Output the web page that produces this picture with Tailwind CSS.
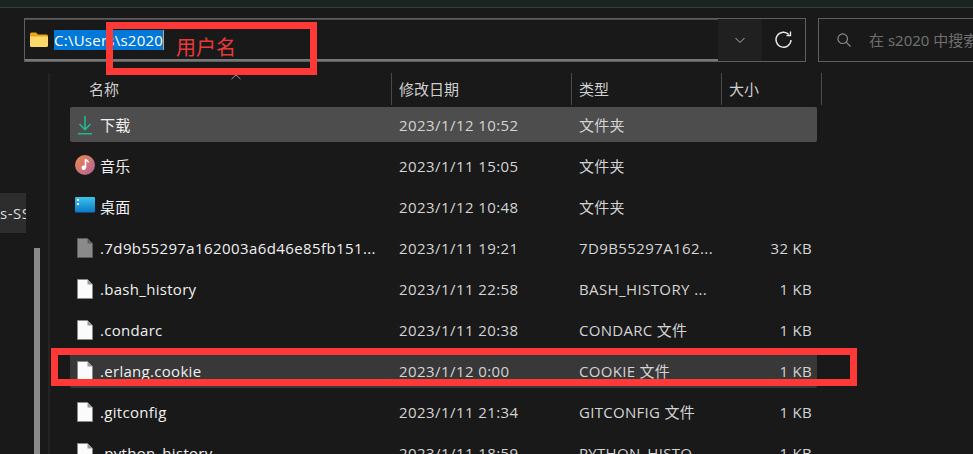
<!DOCTYPE html>
<html lang="zh-CN">
<head>
  <meta charset="UTF-8" />
  <title>s2020</title>
  <script src="https://cdn.jsdelivr.net/npm/@tailwindcss/browser@4"></script>
</head>
<body class="bg-[#191919] text-[#f0f0f0] font-['Noto_Sans','Noto_Sans_CJK_SC',sans-serif] text-[15px] leading-none">
  <div class="relative w-[973px] h-[454px] overflow-hidden">
    <!-- top strip -->
    <div class="h-[8px] bg-[#1a2421] border-b border-[#3a3c3b]"></div>

    <!-- toolbar -->
    <div class="flex h-[44px] mt-[10px] pl-[24px]">
      <div class="flex w-[782px] shrink-0 border border-[#5e5e5e]">
        <div class="flex flex-1 items-center pl-[5px] border-b-2 border-t border-[#777] border-t-[#4c4c4c]">
          <svg class="w-[18px] h-[15px] mr-[6px]" viewBox="0 0 18 15">
            <path d="M0 2a1.500 1.500 0 0 1 1.500-1.500h4.500l2 2h8.500a1.500 1.500 0 0 1 1.500 1.500v1h-18z" fill="#e8a70f"/>
            <path d="M0 4.500h18v9a1.500 1.500 0 0 1-1.500 1.500h-15a1.500 1.500 0 0 1-1.500-1.500z" fill="#fcd96b"/>
          </svg>
          <span class="bg-[#0078d7] text-white h-[20px] leading-[20px] w-[110px] tracking-[0.25px] whitespace-nowrap overflow-hidden border-r border-[#d9a066] font-['Open_Sans',sans-serif]">C:\Users\s2020</span>
        </div>
        <div class="w-[44px] bg-[#202020] flex items-center justify-center">
          <svg class="w-[12px] h-[7px]" viewBox="0 0 12 7" fill="none" stroke="#b5b5b5" stroke-width="1"><path d="M1.500 1l4.500 4.500 4.500-4.500"/></svg>
        </div>
        <div class="w-[43px] flex items-center justify-center pr-[2px]">
          <svg class="w-[18px] h-[18px]" viewBox="0 0 18 18" fill="none" stroke="#e8e8e8" stroke-width="1.400"><path d="M15 3.600a7.500 7.500 0 1 0 2 5.400"/><path d="M16.500 0.500v4h-4" stroke-width="1.300"/></svg>
        </div>
      </div>
      <div class="flex items-center ml-[12px] w-[200px] border border-[#5e5e5e] pl-[18px] shrink-0 whitespace-nowrap text-[#6f6f6f]">
        <svg class="w-[14px] h-[14px] mr-[18px]" viewBox="0 0 14 14" fill="none" stroke="#8a8a8a" stroke-width="1.200"><circle cx="5.700" cy="5.700" r="4.800"/><path d="M9.200 9.200l4.300 4.300"/></svg>
        <span>在 s2020 中搜索</span>
      </div>
    </div>

    <div class="flex mt-[11px]">
      <!-- left pane edge -->
      <div class="w-[50px] h-[381px] border-r-2 border-[#232323] shrink-0 flex flex-col">
        <div class="w-[26px] h-[40px] mt-[120px] bg-[#2d2d2d] overflow-hidden flex items-center whitespace-nowrap tracking-[0.5px] text-[#dcdcdc] font-['Open_Sans',sans-serif]">s-SS</div>
        <div class="w-[6px] ml-[34px] mt-[15px] flex-1 bg-[#8a8a8a]"></div>
      </div>

      <!-- file list -->
      <div class="pl-[20px] w-[772px] shrink-0">
        <div class="relative grid grid-cols-[321px_180px_150px_101px] h-[32px] items-center text-[#cfcfcf]">
          <span class="pl-[19px]">名称</span>
          <span class="pl-[7px] h-full flex items-center border-l border-[#4a4a4a]">修改日期</span>
          <span class="pl-[7px] h-full flex items-center border-l border-[#4a4a4a]">类型</span>
          <span class="pl-[7px] h-full flex items-center border-x border-[#4a4a4a]">大小</span>
          <svg class="absolute left-[160px] top-[1px] w-[12px] h-[6px]" viewBox="0 0 12 6" fill="none" stroke="#9a9a9a"><path d="M1.500 5l4.500-4 4.500 4"/></svg>
        </div>

        <div class="mt-[2px] w-[747px] flex flex-col gap-[6px] font-['Open_Sans','Noto_Sans_CJK_SC',sans-serif] tracking-[0.3px] [&_span]:pt-[2px]">
          <div class="grid grid-cols-[321px_180px_150px_96px] h-[35px] items-center bg-[#4d4d4d] rounded-[2px] text-[#d4d4d4]">
            <div class="flex items-center pl-[8px] text-[#f0f0f0]">
              <svg class="w-[14px] h-[20px] mr-[8px]" viewBox="0 0 14 20" fill="none" stroke="#22b890" stroke-width="1.600"><path d="M7 1v13M1.500 9l5.500 5.500 5.500-5.500M0 18.700h14"/></svg>
              <span>下载</span>
            </div>
            <span class="pl-[8px] tracking-[0.43px]">2023/1/12 10:52</span><span class="pl-[8px]">文件夹</span><span></span>
          </div>

          <div class="grid grid-cols-[321px_180px_150px_96px] h-[35px] items-center text-[#d4d4d4]">
            <div class="flex items-center pl-[5px] text-[#f0f0f0]">
              <svg class="w-[20px] h-[20px] mr-[5px] -mt-[2px]" viewBox="0 0 20 20">
                <defs><linearGradient id="music" x1="0" y1="0" x2="1" y2="1"><stop offset="0" stop-color="#ef8a4a"/><stop offset="1" stop-color="#b0609f"/></linearGradient></defs>
                <circle cx="10" cy="10" r="10" fill="url(#music)"/>
                <path d="M10.500 4v8.500" stroke="#fff" stroke-width="1.600"/><circle cx="8.700" cy="12.800" r="2.200" fill="#fff"/><path d="M10.500 4c1 1.500 2.500 1.500 3 3.500" stroke="#fff" stroke-width="1.300" fill="none"/>
              </svg>
              <span>音乐</span>
            </div>
            <span class="pl-[8px] tracking-[0.43px]">2023/1/11 15:05</span><span class="pl-[8px]">文件夹</span><span></span>
          </div>

          <div class="grid grid-cols-[321px_180px_150px_96px] h-[35px] items-center text-[#d4d4d4]">
            <div class="flex items-center pl-[5px] text-[#f0f0f0]">
              <svg class="w-[20px] h-[16px] mr-[5px] -mt-[4px]" viewBox="0 0 20 16">
                <defs><linearGradient id="desk" x1="0" y1="0" x2="0" y2="1"><stop offset="0" stop-color="#3cc4ea"/><stop offset="1" stop-color="#0a78c8"/></linearGradient></defs>
                <rect width="20" height="15.500" rx="1" fill="url(#desk)"/>
                <rect x="2" y="2" width="2" height="2" fill="#fff"/><rect x="2" y="6" width="2" height="2" fill="#fff"/>
              </svg>
              <span>桌面</span>
            </div>
            <span class="pl-[8px] tracking-[0.43px]">2023/1/12 10:48</span><span class="pl-[8px]">文件夹</span><span></span>
          </div>

          <div class="grid grid-cols-[321px_180px_150px_96px] h-[35px] items-center text-[#d4d4d4]">
            <div class="flex items-center pl-[7px] text-[#f0f0f0]">
              <svg class="w-[16px] h-[20px] mr-[7px]" viewBox="0 0 16 20"><path d="M.500.500h10l5 5v14h-15z" fill="#8a8a8a" stroke="#5c5c5c"/><path d="M10.500.500v5h5" fill="#5c5c5c"/></svg>
              <span class="whitespace-nowrap tracking-[0.4px]">.7d9b55297a162003a6d46e85fb151...</span>
            </div>
            <span class="pl-[8px] tracking-[0.43px]">2023/1/11 19:21</span><span class="pl-[8px] tracking-[0.4px] whitespace-nowrap">7D9B55297A162...</span><span class="text-right pr-[5px]">32 KB</span>
          </div>

          <div class="grid grid-cols-[321px_180px_150px_96px] h-[35px] items-center text-[#d4d4d4]">
            <div class="flex items-center pl-[7px] text-[#f0f0f0]">
              <svg class="w-[16px] h-[20px] mr-[7px]" viewBox="0 0 16 20"><path d="M.500.500h10l5 5v14h-15z" fill="#fbfbfb" stroke="#8a8a8a"/><path d="M10.500.500v5h5" fill="#9a9a9a"/></svg>
              <span>.bash_history</span>
            </div>
            <span class="pl-[8px] tracking-[0.43px]">2023/1/11 22:58</span><span class="pl-[8px] tracking-[0.4px] whitespace-nowrap">BASH_HISTORY ...</span><span class="text-right pr-[5px]">1 KB</span>
          </div>

          <div class="grid grid-cols-[321px_180px_150px_96px] h-[35px] items-center text-[#d4d4d4]">
            <div class="flex items-center pl-[7px] text-[#f0f0f0]">
              <svg class="w-[16px] h-[20px] mr-[7px]" viewBox="0 0 16 20"><path d="M.500.500h10l5 5v14h-15z" fill="#fbfbfb" stroke="#8a8a8a"/><path d="M10.500.500v5h5" fill="#9a9a9a"/></svg>
              <span>.condarc</span>
            </div>
            <span class="pl-[8px] tracking-[0.43px]">2023/1/11 20:38</span><span class="pl-[8px]">CONDARC 文件</span><span class="text-right pr-[5px]">1 KB</span>
          </div>

          <div class="grid grid-cols-[321px_180px_150px_96px] h-[35px] items-center bg-[#383838] rounded-[2px] text-[#d4d4d4]">
            <div class="flex items-center pl-[7px] text-[#f0f0f0]">
              <svg class="w-[16px] h-[20px] mr-[7px]" viewBox="0 0 16 20"><path d="M.500.500h10l5 5v14h-15z" fill="#fbfbfb" stroke="#8a8a8a"/><path d="M10.500.500v5h5" fill="#9a9a9a"/></svg>
              <span>.erlang.cookie</span>
            </div>
            <span class="pl-[8px] tracking-[0.43px]">2023/1/12 0:00</span><span class="pl-[8px]">COOKIE 文件</span><span class="text-right pr-[5px]">1 KB</span>
          </div>

          <div class="grid grid-cols-[321px_180px_150px_96px] h-[35px] items-center text-[#d4d4d4]">
            <div class="flex items-center pl-[7px] text-[#f0f0f0]">
              <svg class="w-[16px] h-[20px] mr-[7px]" viewBox="0 0 16 20"><path d="M.500.500h10l5 5v14h-15z" fill="#fbfbfb" stroke="#8a8a8a"/><path d="M10.500.500v5h5" fill="#9a9a9a"/></svg>
              <span>.gitconfig</span>
            </div>
            <span class="pl-[8px] tracking-[0.43px]">2023/1/11 21:34</span><span class="pl-[8px]">GITCONFIG 文件</span><span class="text-right pr-[5px]">1 KB</span>
          </div>

          <div class="grid grid-cols-[321px_180px_150px_96px] h-[35px] items-center text-[#d4d4d4]">
            <div class="flex items-center pl-[7px] text-[#f0f0f0]">
              <svg class="w-[16px] h-[20px] mr-[7px]" viewBox="0 0 16 20"><path d="M.500.500h10l5 5v14h-15z" fill="#fbfbfb" stroke="#8a8a8a"/><path d="M10.500.500v5h5" fill="#9a9a9a"/></svg>
              <span>.python_history</span>
            </div>
            <span class="pl-[8px] tracking-[0.43px]">2023/1/11 18:59</span><span class="pl-[8px]">PYTHON_HISTO...</span><span class="text-right pr-[5px]">1 KB</span>
          </div>
        </div>
      </div>
    </div>

    <!-- red annotations drawn over the screenshot -->
    <div class="absolute left-[106px] top-[22px] w-[211px] h-[53px] border-[7px] border-[#ff3838]"></div>
    <div class="absolute left-[176px] top-[37px] text-[20px] leading-[20px] text-[#e83a3a] font-['Noto_Sans_CJK_SC',sans-serif]">用户名</div>
    <div class="absolute left-[51px] top-[348px] w-[806px] h-[38px] border-[7px] border-[#ff3838]"></div>
  </div>
</body>
</html>
